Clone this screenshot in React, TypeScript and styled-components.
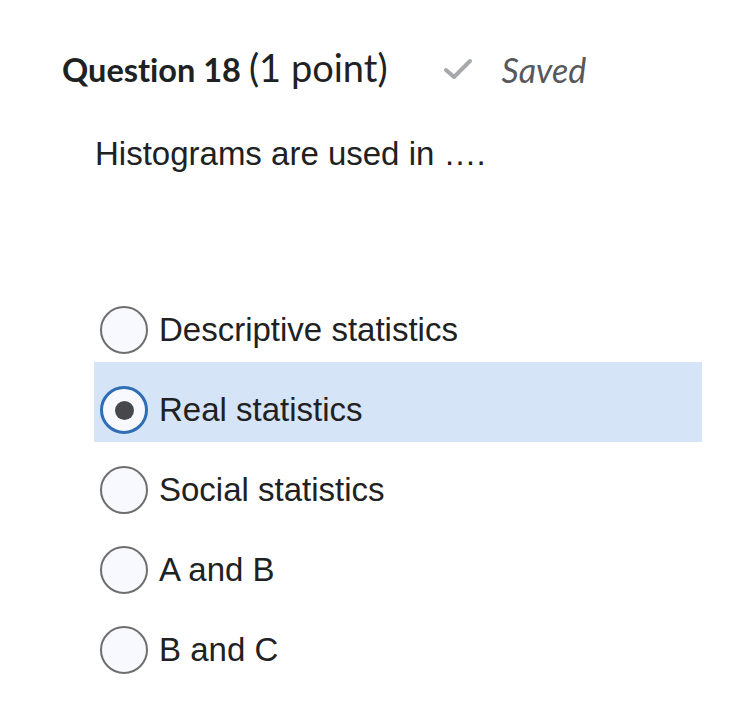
import styled, { createGlobalStyle } from "styled-components";

const GlobalStyle = createGlobalStyle`
  html, body {
    margin: 0;
    padding: 0;
    background: #ffffff;
  }
`;

const Page = styled.div`
  width: 750px;
  height: 725px;
  padding: 44px 0 0 62px;
  box-sizing: border-box;
  color: #202122;
`;

const Header = styled.div`
  display: flex;
  align-items: baseline;
  font-family: Lato, "Noto Sans", sans-serif;
  font-variant-ligatures: none;
  height: 50px;
`;

const Title = styled.span`
  font-weight: 700;
  font-size: 32.5px;
  margin-right: 8px;
`;

const Points = styled.span`
  font-weight: 400;
  font-size: 38px;
`;

const Status = styled.span`
  display: flex;
  align-items: center;
  align-self: center;
  margin-left: 55px;
  gap: 29px;
  font-style: italic;
  color: #56585b;
  font-size: 34px;
`;

const Prompt = styled.p`
  margin: 40px 0 0 33px;
  font-family: "Liberation Sans", Arial, sans-serif;
  font-size: 33px;
  line-height: 40px;
`;

const Options = styled.div`
  display: flex;
  flex-direction: column;
  margin: 108px 0 0 32px;
  width: 608px;
`;

const Row = styled.label<{ $selected?: boolean }>`
  display: flex;
  align-items: center;
  height: 80px;
  box-sizing: border-box;
  padding: 21px 0 5px 6px;
  gap: 11px;
  background: ${(p) => (p.$selected ? "#d6e4f7" : "transparent")};
  font-family: "Liberation Sans", Arial, sans-serif;
  font-size: 33px;
`;

const Radio = styled.span<{ $selected?: boolean }>`
  width: 48px;
  height: 48px;
  flex: none;
  box-sizing: border-box;
  border-radius: 50%;
  border: ${(p) => (p.$selected ? "3px solid #2f6db5" : "2px solid #6e6e70")};
  background: #f8f9ff;
  display: flex;
  align-items: center;
  justify-content: center;
  &::after {
    content: "";
    width: 19px;
    height: 19px;
    border-radius: 50%;
    background: #48484c;
    display: ${(p) => (p.$selected ? "block" : "none")};
  }
`;

const options = [
  "Descriptive statistics",
  "Real statistics",
  "Social statistics",
  "A and B",
  "B and C",
];

export default function App() {
  return (
    <>
      <GlobalStyle />
      <Page>
        <Header>
          <Title>Question 18</Title>
          <Points>(1 point)</Points>
          <Status>
            <svg width="30" height="22" viewBox="0 0 30 22">
              <path
                d="M3 12 L11 19 L27 3"
                fill="none"
                stroke="#a6a8ab"
                strokeWidth="4"
                strokeLinecap="round"
                strokeLinejoin="round"
              />
            </svg>
            Saved
          </Status>
        </Header>
        <Prompt>Histograms are used in ….</Prompt>
        <Options>
          {options.map((o, i) => (
            <Row key={o} $selected={i === 1}>
              <Radio $selected={i === 1} />
              {o}
            </Row>
          ))}
        </Options>
      </Page>
    </>
  );
}
